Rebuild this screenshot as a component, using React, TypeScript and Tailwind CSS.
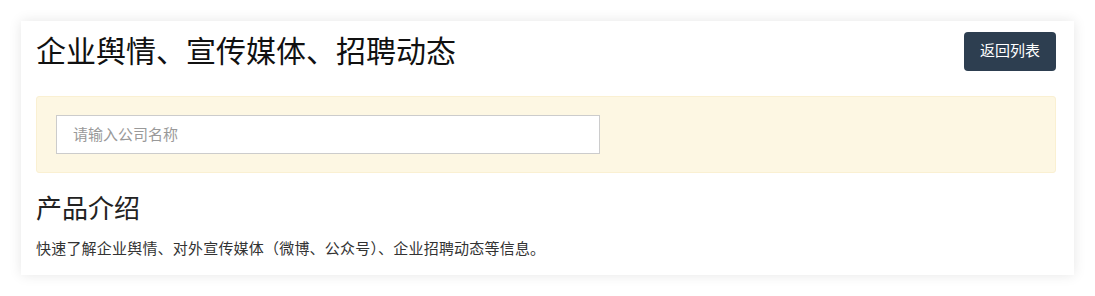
import React from 'react';

export default function App() {
  return (
    <div
      className="min-h-[296px] bg-white px-[21px] pt-[21px]"
      style={{ fontFamily: '"Liberation Sans", "Noto Sans CJK SC", sans-serif' }}
    >
      <div className="bg-white pl-[15px] pr-[18px] pt-[10px] pb-[16px] shadow-[0_0_12px_rgba(0,0,0,0.1)]">
        <div className="flex items-start justify-between">
          <h1 className="mt-[1px] text-[30px] leading-[40px] text-[#111]">企业舆情、宣传媒体、招聘动态</h1>
          <button className="mt-[1px] h-[39px] rounded-[4px] bg-[#2d3e50] px-[16px] text-[15px] text-white">
            返回列表
          </button>
        </div>
        <div className="mt-[24px] rounded-[3px] border border-[#faf0d2] bg-[#fdf7e3] px-[19px] py-[18px]">
          <input
            className="h-[39px] w-[544px] border border-[#ccc] bg-white px-[16px] text-[15px] text-[#333] outline-none placeholder:text-[#999]"
            placeholder="请输入公司名称"
          />
        </div>
        <h2 className="mt-[18px] text-[26px] leading-[36px] text-[#222]">产品介绍</h2>
        <p className="mt-[11px] text-[15px] leading-[21px] tracking-[0.2px] text-[#333]">
          快速了解企业舆情、对外宣传媒体（微博、公众号）、企业招聘动态等信息。
        </p>
      </div>
    </div>
  );
}
